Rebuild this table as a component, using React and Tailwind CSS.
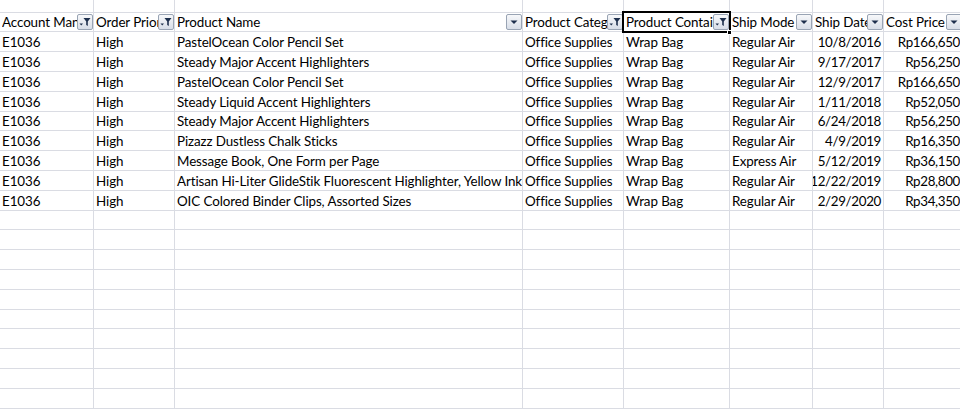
import React from 'react';

const widths = ['w-[94px]', 'w-[81px]', 'w-[348px]', 'w-[101px]', 'w-[106px]', 'w-[83px]', 'w-[71px]', 'w-[79px]'];

// filter: 'on' = filtered (funnel), 'drop' = plain dropdown
const headers = [
  { label: 'Account Manager', btn: 'on' },
  { label: 'Order Priority', btn: 'on' },
  { label: 'Product Name', btn: 'drop' },
  { label: 'Product Category', btn: 'on' },
  { label: 'Product Container', btn: 'on' },
  { label: 'Ship Mode', btn: 'drop' },
  { label: 'Ship Date', btn: 'drop' },
  { label: 'Cost Price', btn: 'drop' },
];

const rows = [
  ['PastelOcean Color Pencil Set', 'Regular Air', '10/8/2016', 'Rp166,650'],
  ['Steady Major Accent Highlighters', 'Regular Air', '9/17/2017', 'Rp56,250'],
  ['PastelOcean Color Pencil Set', 'Regular Air', '12/9/2017', 'Rp166,650'],
  ['Steady Liquid Accent Highlighters', 'Regular Air', '1/11/2018', 'Rp52,050'],
  ['Steady Major Accent Highlighters', 'Regular Air', '6/24/2018', 'Rp56,250'],
  ['Pizazz Dustless Chalk Sticks', 'Regular Air', '4/9/2019', 'Rp16,350'],
  ['Message Book, One Form per Page', 'Express Air', '5/12/2019', 'Rp36,150'],
  ['Artisan Hi-Liter GlideStik Fluorescent Highlighter, Yellow Ink', 'Regular Air', '12/22/2019', 'Rp28,800'],
  ['OIC Colored Binder Clips, Assorted Sizes', 'Regular Air', '2/29/2020', 'Rp34,350'],
];

const FilterButton = ({ type }) => (
  <div className="absolute right-0 top-[1px] w-[16px] h-[16px] rounded-[2px] border border-[#99a4b4] bg-gradient-to-b from-[#f7f8fa] to-[#d8dee8]">
    <svg width="14" height="14" viewBox="0 0 14 14" className="block">
      {type === 'drop' ? (
        <path d="M3.5 5.5 H10.5 L7 9 Z" fill="#1d2f4d" />
      ) : (
        <>
          <path d="M1.5 8.5 H5 L3.25 10.5 Z" fill="#1d2f4d" />
          <path d="M5.5 3 H12.5 L9.8 6.5 V11 L8.2 10 V6.5 Z" fill="#1d2f4d" />
        </>
      )}
    </svg>
  </div>
);

const Cell = ({ i, children, right, h }) => (
  <div
    className={`relative shrink-0 ${widths[i]} ${h} pt-[2px] border-r border-b border-[#dadce3] overflow-hidden whitespace-nowrap flex items-center ${
      right ? 'justify-end pr-[2px] tracking-[-0.35px]' : 'pl-[2px]'
    }`}
  >
    {children}
  </div>
);

const rowH = (i) => (i % 5 === 0 ? 'h-[19px]' : 'h-[20px]');

export default function App() {
  const blank = Array.from({ length: 10 });

  return (
    <div className="relative w-[960px] h-[415px] overflow-hidden bg-white text-black text-[13.4px] tracking-[-0.1px] leading-none font-['Lato',sans-serif]">
      {/* top partial row */}
      <div className="flex">
        {widths.map((_, i) => (
          <Cell key={i} i={i} h="h-[13px]" />
        ))}
      </div>

      {/* header row */}
      <div className="flex">
        {headers.map((hd, i) => (
          <Cell key={i} i={i} h={rowH(0)}>
            <span className="block w-full pr-[16px] overflow-hidden">{hd.label}</span>
            <FilterButton type={hd.btn} />
          </Cell>
        ))}
      </div>

      {/* data rows */}
      {rows.map((r, ri) => (
        <div key={ri} className="flex">
          <Cell i={0} h={rowH(ri + 1)}>E1036</Cell>
          <Cell i={1} h={rowH(ri + 1)}>High</Cell>
          <Cell i={2} h={rowH(ri + 1)}>{r[0]}</Cell>
          <Cell i={3} h={rowH(ri + 1)}>Office Supplies</Cell>
          <Cell i={4} h={rowH(ri + 1)}>Wrap Bag</Cell>
          <Cell i={5} h={rowH(ri + 1)}>{r[1]}</Cell>
          <Cell i={6} h={rowH(ri + 1)} right>{r[2]}</Cell>
          <Cell i={7} h={rowH(ri + 1)} right>{r[3]}</Cell>
        </div>
      ))}

      {/* empty rows */}
      {blank.map((_, bi) => (
        <div key={bi} className="flex">
          {widths.map((__, i) => (
            <Cell key={i} i={i} h={rowH(bi + 10)} />
          ))}
        </div>
      ))}

      {/* active cell selection */}
      <div className="absolute left-[622px] top-[11px] w-[109px] h-[22px] border-2 border-black pointer-events-none" />
      <div className="absolute left-[727px] top-[30px] w-[5px] h-[5px] bg-black border border-white" />
    </div>
  );
}
